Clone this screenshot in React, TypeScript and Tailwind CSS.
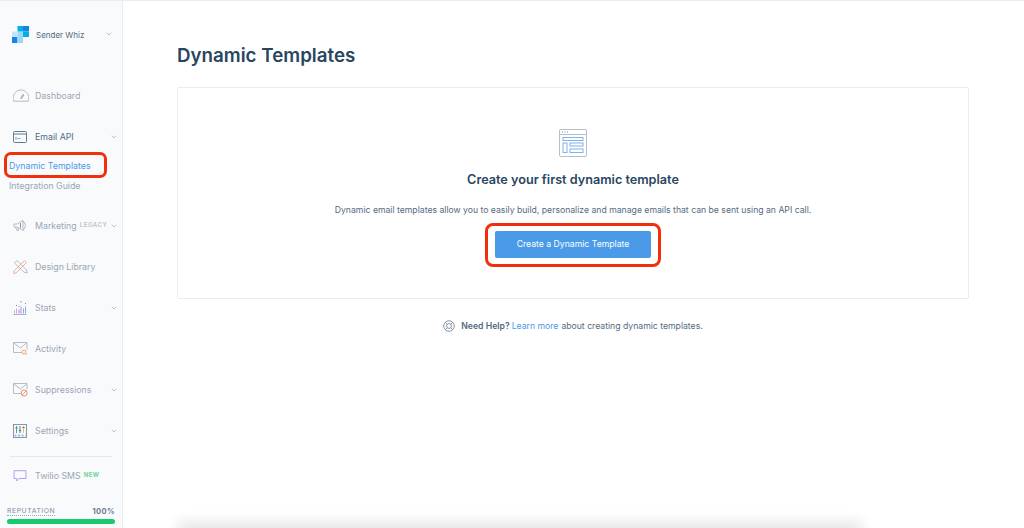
import { ChevronDown } from 'lucide-react';
import type { ReactNode } from 'react';

// Sidebar icons, drawn to match the screenshot
const GaugeIcon = () => (
  <svg width="16" height="13" viewBox="0 0 16 13" fill="none" stroke="#aab4c2" strokeWidth="0.9">
    <path d="M0.7 12.2h14.6c.4-1 .5-1.8.5-3C15.8 4.6 12.300 1 8 1S.2 4.600.2 9.200c0 1.200.1 2 .5 3z" />
    <path d="M7.500 9.500 10.500 5" stroke="#f0916c" strokeWidth="1.100" />
    <path d="M8.500 10 11 6" stroke="#6ea8ea" strokeWidth="0.800" />
  </svg>
);

const TerminalIcon = () => (
  <svg width="14" height="12" viewBox="0 0 14 12" fill="none">
    <rect x="0.500" y="0.500" width="13" height="11" rx="1" stroke="#66788f" />
    <path d="M.5 3h13" stroke="#66788f" />
    <path d="M3 6v2.500" stroke="#36b37e" />
    <path d="M4.500 7.500h3" stroke="#6ea8ea" />
  </svg>
);

const MegaphoneIcon = () => (
  <svg width="15" height="13" viewBox="0 0 15 13" fill="none" stroke="#aab4c2" strokeWidth="0.900">
    <path d="M1 5h3l6-3.500v10L4 8H1z" />
    <path d="M2.500 8.200 4 11.500h1.500L5 8.500" />
    <path d="M10 2.500c3 .5 3 7.500 0 8" />
    <path d="M7.500 4v5" stroke="#7d8ba0" />
  </svg>
);

const RulerIcon = () => (
  <svg width="15" height="15" viewBox="0 0 15 15" fill="none" strokeWidth="0.900">
    <path d="M1.500 4 4 1.500 13.500 11l.7 3-3-.7z" stroke="#aab4c2" />
    <path d="M1 12 11.500 1.500l2 2L3 14l-2.200.5z" stroke="#f2a58a" />
  </svg>
);

const BarsIcon = () => (
  <svg width="14" height="15" viewBox="0 0 14 15" fill="none" strokeWidth="1">
    <path d="M.5 14.500h13" stroke="#aab4c2" />
    <path d="M1.500 13.500v-3M3.500 13.500v-5" stroke="#e79ad0" />
    <path d="M6 13.500v-4M8 13.500v-7" stroke="#9d8ce6" />
    <path d="M10.500 13.500v-5M12.500 13.500v-7" stroke="#8aa6ea" />
    <path d="M3.500 5v1M8 1v1.500M12.500 3v1M6 6v1" stroke="#7d8ba0" />
  </svg>
);

const MailSearchIcon = () => (
  <svg width="15" height="14" viewBox="0 0 15 14" fill="none">
    <path d="M9 10.500H.5V.5h13.500v7" stroke="#aab4c2" strokeWidth="0.900" />
    <path d="m.7.800 6.600 5.200L14 .8" stroke="#aab4c2" strokeWidth="0.900" />
    <circle cx="11" cy="10" r="2" stroke="#f4a25b" />
    <path d="m12.500 11.500 1.500 1.500" stroke="#f4a25b" />
  </svg>
);

const MailBlockIcon = () => (
  <svg width="15" height="14" viewBox="0 0 15 14" fill="none">
    <path d="M8.500 10.500h-8V.5h13.500v6" stroke="#aab4c2" strokeWidth="0.900" />
    <path d="m.7.800 6.600 5.200L14 .8" stroke="#aab4c2" strokeWidth="0.900" />
    <circle cx="11.200" cy="10" r="3" fill="#fff" stroke="#f08a7a" />
    <path d="m9.200 12 4-4" stroke="#f08a7a" />
  </svg>
);

const SlidersIcon = () => (
  <svg width="14" height="14" viewBox="0 0 14 14" fill="none">
    <rect x="0.500" y="0.500" width="13" height="13" stroke="#7d8ba0" strokeWidth="0.900" />
    <path d="M3.500 2v7" stroke="#36b37e" />
    <path d="M7 2v7" stroke="#66788f" />
    <path d="M10.500 2v7" stroke="#e6c84f" />
    <path d="M2.300 4h2.400M5.800 6.500h2.400M9.300 3.500h2.400" stroke="#66788f" />
    <path d="M1.500 11.500h11" stroke="#8fb8ee" strokeWidth="2" strokeDasharray="2 1.500" />
  </svg>
);

const ChatIcon = () => (
  <svg width="14" height="12" viewBox="0 0 14 12" fill="none" stroke="#b99bf0" strokeWidth="1">
    <path d="M1 .7h12v7.800H6L3.800 11V8.500H1z" />
  </svg>
);

const LogoIcon = () => (
  <svg width="17" height="17" viewBox="0 0 17 17">
    <rect x="5.500" y="5.500" width="5.500" height="5.500" fill="#9dd7f5" />
    <rect x="11" y="0" width="6" height="5.500" fill="#1a82e2" />
    <rect x="5.500" y="0" width="5.500" height="5.500" fill="#00b2e3" />
    <rect x="11" y="5.500" width="6" height="5.500" fill="#00b2e3" />
    <rect x="0" y="5.500" width="5.500" height="5.500" fill="#bfe7f8" />
    <rect x="0" y="11" width="5.500" height="6" fill="#1a82e2" />
    <rect x="5.500" y="11" width="5.500" height="6" fill="#9dd7f5" />
  </svg>
);

const TemplateIcon = () => (
  <svg width="28" height="28" viewBox="0 0 28 28" fill="none">
    <rect x="0.500" y="0.500" width="27" height="27" rx="1.500" stroke="#b5bfcc" />
    <path d="M.5 5.500h27" stroke="#b5bfcc" />
    <path d="M3 3h1M5.500 3h1M8 3h1" stroke="#7d8ba0" />
    <rect x="4" y="8.500" width="20" height="3" stroke="#7db3ee" />
    <rect x="4" y="14" width="4" height="9.500" stroke="#7db3ee" />
    <rect x="11" y="14" width="13" height="3" stroke="#7db3ee" />
    <rect x="11" y="20" width="13" height="3.500" stroke="#7db3ee" />
  </svg>
);

const LifebuoyIcon = () => (
  <svg width="12" height="12" viewBox="0 0 12 12" fill="none" stroke="#8a97a8" strokeWidth="1">
    <circle cx="6" cy="6" r="5.300" />
    <circle cx="6" cy="6" r="2.400" />
    <path d="m2.300 2.300 2 2M9.700 2.300l-2 2M2.300 9.700l2-2M9.700 9.700l-2-2" />
  </svg>
);

interface NavRowProps {
  icon: ReactNode;
  label: string;
  active?: boolean;
  chevron?: boolean;
  badge?: ReactNode;
  className?: string;
}

function NavRow({ icon, label, active, chevron, badge, className }: NavRowProps) {
  return (
    <div className={`flex items-center h-[41px] pl-[13px] pr-[4px] ${className ?? ''}`}>
      <span className="w-[22px] flex justify-start items-center shrink-0">{icon}</span>
      <span className={`text-[8.8px] whitespace-nowrap ${active ? 'text-[#546b81]' : 'text-[#9aa7b5]'}`}>{label}</span>
      {badge}
      {chevron && <ChevronDown size={8} strokeWidth={2} className="ml-auto text-[#9aa7b5]" />}
    </div>
  );
}

function Sidebar() {
  return (
    <aside className="w-[123px] shrink-0 h-full bg-[#f9fafc] border-r border-[#e9ecef] flex flex-col">
      {/* Account */}
      <div className="flex items-center pl-3 pr-[9px] pt-[19px] h-[74px] pb-[26px]">
        <LogoIcon />
        <span className="ml-[7px] text-[8px] text-[#546b81] whitespace-nowrap">Sender Whiz</span>
        <ChevronDown size={8} strokeWidth={2} className="ml-auto mb-[2px] text-[#9aa7b5]" />
      </div>

      <NavRow icon={<GaugeIcon />} label="Dashboard" />
      <NavRow icon={<TerminalIcon />} label="Email API" active chevron />

      {/* Email API sub nav */}
      <div className="flex flex-col pl-[9px] text-[8.8px] -mt-[1px] mb-[10px]">
        <div className="relative h-5 flex items-center text-[#4a9ae8] whitespace-nowrap">
          Dynamic Templates
          <span className="absolute -left-[5px] -top-[4px] w-[103px] h-[26px] rounded-[7px] border-[3px] border-[#f22f0c]" />
        </div>
        <div className="h-[19px] flex items-center text-[#9aa7b5] whitespace-nowrap">Integration Guide</div>
      </div>

      <NavRow
        icon={<MegaphoneIcon />}
        label="Marketing"
        chevron
        badge={<span className="ml-[3px] mb-[3px] text-[6px] font-semibold tracking-[0.6px] text-[#b9c2cd]">LEGACY</span>}
      />
      <NavRow icon={<RulerIcon />} label="Design Library" />
      <NavRow icon={<BarsIcon />} label="Stats" chevron />
      <NavRow icon={<MailSearchIcon />} label="Activity" />
      <NavRow icon={<MailBlockIcon />} label="Suppressions" chevron />
      <NavRow icon={<SlidersIcon />} label="Settings" chevron />

      <div className="mx-[10px] mt-[5px] h-px bg-[#e4e7eb]" />

      <div className="flex items-center h-[38px] pl-[13px]">
        <span className="w-[22px] flex items-center shrink-0"><ChatIcon /></span>
        <span className="text-[8.8px] text-[#9aa7b5] whitespace-nowrap">Twilio SMS</span>
        <span className="ml-[3px] mb-[3px] text-[6px] font-bold tracking-[0.4px] text-[#6fd49a]">NEW</span>
      </div>

      {/* Reputation meter */}
      <div className="mt-auto px-[7px] pb-[4px]">
        <div className="flex justify-between items-end">
          <span className="text-[6.8px] tracking-[0.6px] text-[#7d8ba0] border-b border-dotted border-[#9aa7b5] leading-[9px]">REPUTATION</span>
          <span className="text-[7.5px] font-bold tracking-[0.4px] text-[#6b7c90] leading-[9px]">100%</span>
        </div>
        <div className="mt-[3px] h-[5px] rounded-full bg-[#18c96e]" />
      </div>
    </aside>
  );
}

export default function App() {
  return (
    <div className="relative w-[1024px] h-[528px] overflow-hidden bg-white flex border-t border-[#e9ecef] font-['Inter',sans-serif]">
      <Sidebar />

      <main className="flex-1 pl-[54px] pr-[55px] pt-[41px]">
        <h1 className="text-[18.75px] leading-7 font-semibold text-[#294661]">Dynamic Templates</h1>

        <section className="mt-[17px] h-[212px] border border-[#e9ecef] rounded-[2px] flex flex-col items-center pt-[41px]">
          <TemplateIcon />
          <h2 className="mt-[13px] text-[12.65px] leading-5 font-semibold text-[#294661]">Create your first dynamic template</h2>
          <p className="mt-[13px] text-[8.66px] leading-[14px] text-[#546b81]">
            Dynamic email templates allow you to easily build, personalize and manage emails that can be sent using an API call.
          </p>
          <div className="relative mt-[14px]">
            <button className="block w-[156px] h-[27px] rounded-[2px] bg-[#4a9ae8] text-[8.66px] text-white">
              Create a Dynamic Template
            </button>
            <span className="absolute -left-[10px] -top-[8px] w-[176px] h-[44px] rounded-[8px] border-[3px] border-[#f22f0c]" />
          </div>
        </section>

        <p className="mt-[20px] flex items-center justify-center text-[8.66px] leading-[14px] text-[#546b81]">
          <LifebuoyIcon />
          <span className="ml-[6px] font-semibold">Need Help?</span>
          <span className="ml-[2px] text-[#4a9ae8]">Learn more</span>
          <span className="ml-[3px]">about creating dynamic templates.</span>
        </p>
      </main>

      {/* Soft shadow coming up from the page bottom */}
      <div className="absolute left-[182px] bottom-[-12px] w-[676px] h-[12px] shadow-[0_-2px_14px_4px_rgba(0,0,0,0.1)]" />
    </div>
  );
}
